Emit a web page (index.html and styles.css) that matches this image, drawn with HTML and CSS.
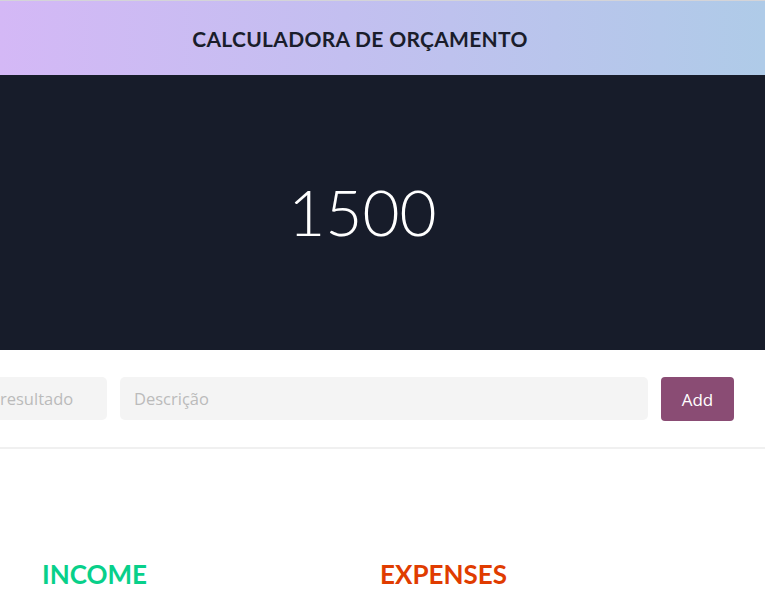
FILE: index.html
```html
<!DOCTYPE html>
<html lang="pt">
<head>
<meta charset="utf-8">
<link rel="stylesheet" href="styles.css">
</head>
<body>
<header class="top">
  <h1 class="title">CALCULADORA DE ORÇAMENTO</h1>
</header>
<section class="balance">
  <div class="amount">1500</div>
</section>
<form class="entry">
  <input class="field field-value" type="text" placeholder="resultado">
  <input class="field field-desc" type="text" placeholder="Descrição">
  <button class="add" type="button">Add</button>
</form>
<section class="lists">
  <h2 class="heading income">INCOME</h2>
  <h2 class="heading expenses">EXPENSES</h2>
</section>
</body>
</html>
```
FILE: styles.css
```css
* { box-sizing: border-box; }
html, body { margin: 0; padding: 0; }
body {
  font-family: Lato, "Open Sans", sans-serif;
  background: #ffffff;
  width: 765px;
  overflow: hidden;
}
.top {
  height: 75px;
  border-top: 1px solid #d4d4d8;
  background: linear-gradient(90deg, #d4b8f6 0%, #c3bff0 45%, #afcbe8 100%);
  display: flex;
  align-items: center;
  justify-content: center;
  padding-right: 45px;
}
.title {
  margin: 0;
  font-family: Lato, sans-serif;
  font-weight: 700;
  font-size: 21px;
  letter-spacing: 0.3px;
  color: #1a1d2b;
}
.balance {
  height: 275px;
  background: #171c2a;
  display: flex;
  align-items: center;
  justify-content: center;
  padding-right: 40px;
}
.amount {
  font-family: Lato, sans-serif;
  font-weight: 300;
  font-size: 64px;
  color: #ffffff;
  margin-top: -3px;
}
.entry {
  display: flex;
  justify-content: flex-end;
  gap: 13px;
  padding: 27px 31px 26px 0;
  border-bottom: 2px solid #f0f0f0;
  height: 99px;
}
.field {
  flex-shrink: 0;
  height: 43px;
  border: none;
  border-radius: 5px;
  background: #f4f4f4;
  padding: 0 14px;
  font-family: "Open Sans", sans-serif;
  font-size: 16.5px;
  color: #333;
  outline: none;
}
.field::placeholder { color: #bbbbbb; }
.field-value { width: 121px; }
.field-desc { width: 528px; }
.add {
  flex-shrink: 0;
  width: 73px;
  height: 44px;
  border: none;
  border-radius: 4px;
  background: #8a4c74;
  color: #ffffff;
  font-family: "Open Sans", sans-serif;
  font-size: 17px;
}
.lists {
  display: grid;
  grid-template-columns: 338px 338px;
  padding: 109px 0 0 42px;
}
.heading {
  margin: 0;
  font-family: Lato, sans-serif;
  font-weight: 700;
  font-size: 26px;
}
.income { color: #08d08a; }
.expenses { color: #e03c00; }
```
